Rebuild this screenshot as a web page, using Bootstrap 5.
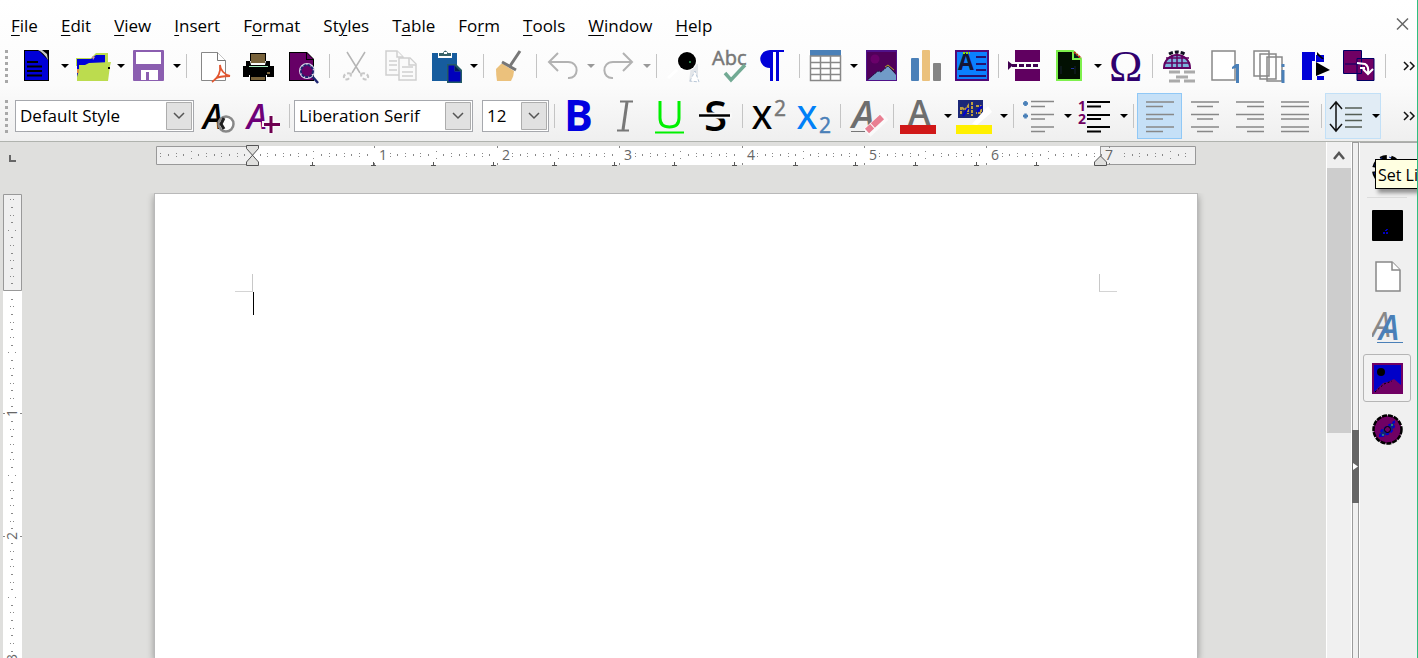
<!DOCTYPE html>
<html lang="en">
<head>
<meta charset="utf-8">
<meta name="viewport" content="width=device-width, initial-scale=1">
<title>Writer</title>
<link href="https://cdn.jsdelivr.net/npm/bootstrap@5.3.0/dist/css/bootstrap.min.css" rel="stylesheet">
<style>
body{font:17px/24px "Open Sans","Noto Sans",sans-serif;color:#000;background:#dfdfdd;border-right:1px solid #2fbf80}
.chrome{background:linear-gradient(#fff,#fbfbfb 60%,#efefef);border-bottom:1px solid #b0b3ae;padding-bottom:2px}
.menubar{height:43px;padding:14px 0 0 11px;gap:23px}
.menubar a{color:#000;text-decoration:none}
.menubar u{text-underline-offset:3px;text-decoration-thickness:1px}
.closer{width:30px;height:24px}
.tools{height:46px;padding-left:5px}
.tools-a{margin-bottom:4px}
.grip{width:3px;height:33px;margin-right:6px;background:repeating-linear-gradient(#a8a8a8 0 3px,transparent 3px 6px)}
.tool{width:45px;height:46px;padding:0 0 0 7px;border:0;background:none;text-align:left;display:flex;align-items:center;flex:none}
.tool svg{width:32px;height:32px;overflow:visible;flex:none}
.tool.drop{width:56px}
.tool.drop::after{content:"";border:4px solid transparent;border-top-color:#000;border-bottom:0;margin-left:8px}
.tool.drop.off::after{border-top-color:#999}
.tool.on{background:#c5e0f7;box-shadow:inset 0 0 0 1px #90c8f6}
.tool.hot{background:#e1ecf5;box-shadow:inset 0 0 0 1px #c2e0f7}
.rule{width:1px;height:24px;margin:0 3px 0 4px;background:#c4c4c4;flex:none}
.combo{height:32px;position:relative;flex:none;margin:0 1px}
.combo select{appearance:none;width:100%;height:32px;border:1px solid #a6a8ad;border-radius:0;background:#fff;padding:0 0 0 4px;color:#000;font-size:17px;line-height:30px}
.combo svg{position:absolute;right:1px;top:2px;width:27px;height:28px;pointer-events:none}
.combo-wide{width:179px}.combo-slim{width:67px}
.more{width:14px;height:14px;border:0;background:none;padding:0;margin-right:1px}
.more svg,.closer svg{display:block}
.corner{width:22px}
.vruler{width:22px;padding-left:3px}
.canvas-pad{padding-left:4px}
.ruler-row{height:51px}
.hruler{width:1040px;height:24px;margin-top:2px;display:block;overflow:visible;flex:none}
.sheet{width:1044px;background:#fff;border:1px solid #b9b9b9;border-bottom:0;box-shadow:0 3px 7px #0005;padding:80px 80px 0;flex:none}
.mark-l{width:18px;height:18px;border-right:1px solid #c8c8c8;border-bottom:1px solid #d4d4d4}
.mark-r{width:18px;height:18px;border-left:1px solid #c8c8c8;border-bottom:1px solid #d4d4d4}
.caret{width:1px;height:23px;margin-left:18px;background:#000}
.vbar{width:26px;background:#f0f0f0;border-left:1px solid #fff;border-right:1px solid #fff;flex:none}
.vbar button{height:26px;border:0;padding:0;background:#f0f0f0}
.thumb{height:51.4%;background:#cdcdcd}
.splitter{width:7px;border:solid #9b9b9b;border-width:1px 1px 0;background:#f0f0f0;padding-top:287px;flex:none}
.handle{display:block;width:7px;height:73px;margin-left:-1px;border:0;padding:0;background:#666}
.sidebar{width:58px;background:#f0f0f0;border-top:1px solid #aaa;border-left:1px solid #fff;padding:3px 6px 0 3px;gap:3px;flex:none;position:relative}
.deck{width:48px;height:48px;padding:0;border:1px solid transparent;border-radius:3px;background:none;display:flex;align-items:center;justify-content:center}
.deck.on{border-color:#b5b5b5;background:#f2f2f2}
.deck svg{width:31px;height:31px}
.side-line{height:1px;width:40px;background:#dcdcdc}
.tipbox{position:absolute;left:15px;top:16px;right:0;height:30px;border:1px solid #000;border-right:0;background:#ffffe1;box-shadow:3px 4px 4px #0006;padding:3px 0 0 2px;font-size:16px;white-space:nowrap;overflow:hidden}
svg text{font-family:"Open Sans","Noto Sans",sans-serif}
</style>
</head>
<body class="vh-100 d-flex flex-column overflow-hidden">
<header class="chrome">
 <div class="d-flex">
  <nav class="menubar d-flex flex-grow-1" aria-label="Menu">
   <a href="#"><u>F</u>ile</a><a href="#"><u>E</u>dit</a><a href="#"><u>V</u>iew</a><a href="#"><u>I</u>nsert</a><a href="#">F<u>o</u>rmat</a><a href="#">St<u>y</u>les</a><a href="#">T<u>a</u>ble</a><a href="#">Fo<u>r</u>m</a><a href="#"><u>T</u>ools</a><a href="#"><u>W</u>indow</a><a href="#"><u>H</u>elp</a>
  </nav>
  <button class="closer border-0 bg-transparent p-0 mt-2" aria-label="Close"><svg class="m-auto" width="18" height="32" viewBox="0 0 18 32"><path d="M4 10.500l11 11M15 10.500l-11 11" stroke="#666" stroke-width="1.500"/></svg></button>
 </div>
 <div class="tools tools-a d-flex align-items-center" role="toolbar" aria-label="Standard">
  <span class="grip"></span>
  <button class="tool drop" aria-label="New"><svg viewBox="0 0 32 32"><path d="M3 0h17l8 8v23H3z" fill="#000"/><path d="M4 1h14l9 9v20H4z" fill="#0000d8"/><path d="M19 0h9v9z" fill="#000"/><path d="M17 0q6 3 10 10l-1-6-5-4z" fill="#c8c8c8"/><path d="M6 12h11M6 16.500h15M6 21h15M6 25.500h15" stroke="#000" stroke-width="2"/></svg></button>
  <button class="tool drop" aria-label="Open"><svg viewBox="0 0 32 32"><path d="M-1 8h15l5-5h12v13H-1z" fill="#bcdc4e"/><path d="M0 9h14l5-4h9v9H14l-8 5-3 8H0z" fill="#0000d8"/><path d="M15 6l3 1-2 3z" fill="#d890a0"/><path d="M0 27l2-8v-4h6l4-2 22-1-1 4-2 15H0z" fill="#bcdc4e"/><path d="M0 19h2v4H0z" fill="#e09040"/><path d="M31 17h2v2h-2z" fill="#000"/></svg></button>
  <button class="tool drop" aria-label="Save"><svg viewBox="0 0 32 32"><rect width="31" height="31" rx="1" fill="#8b5eb0"/><path d="M3 2h25v12H3zM8 20h17v10H8z" fill="#fff"/><path d="M13 22h3v8h-3z" fill="#8b5eb0"/></svg></button>
  <span class="rule"></span>
  <button class="tool" aria-label="Export as PDF"><svg viewBox="0 0 32 32"><path d="M4.500 2.500h16l8 8v20h-24z" fill="#fff" stroke="#888"/><path d="M20.500 2.500v8h8" fill="#fff" stroke="#777"/><path d="M15 32c6-4 9-10 8-17 0 5 5 10 10 11-6 0-11 0-15 3" fill="none" stroke="#e2562f" stroke-width="1.800"/></svg></button>
  <button class="tool" aria-label="Print"><svg viewBox="0 0 32 32"><path d="M8 3h16v8H8zM8 25h16v6H8z" fill="#000"/><path d="M9 4h14v9H9zM9 27h14v3H9z" fill="#78623a"/><path d="M4 11h4l1 4h14l1-4h4v5h4v11h-7v-2H7v2H1V16h3z" fill="#000"/><path d="M7 16.500h19" stroke="#a6eec0"/><path d="M25 22h3v2h-3z" fill="#78623a"/></svg></button>
  <button class="tool" aria-label="Print Preview"><svg viewBox="0 0 32 32"><path d="M2 2h18l7 7v22H2z" fill="#000"/><path d="M3 3h16v7h7v20H3z" fill="#660066"/><path d="M20 3l6 6h-6z" fill="#660066"/><path d="M25 26l6 7" stroke="#1c2470" stroke-width="2.500"/><circle cx="20" cy="21" r="7" fill="#660066" stroke="#d8d8e8" stroke-width="2"/><circle cx="20" cy="21" r="6" fill="none" stroke="#1c2470" stroke-width="2" stroke-dasharray="3 1"/></svg></button>
  <span class="rule"></span>
  <button class="tool" aria-label="Cut" disabled><svg viewBox="0 0 32 32"><path d="M7 2l13 21M25 2L12 23" stroke="#b5b5b5" stroke-width="1.500"/><path d="M11 24c-4-2-8 1-7 4s7 1 7-4zM21 24c4-2 8 1 7 4s-7 1-7-4z" fill="none" stroke="#c8c8c8" stroke-width="2" stroke-dasharray="4 2"/></svg></button>
  <button class="tool" aria-label="Copy" disabled><svg viewBox="0 0 32 32" fill="#fafafa" stroke="#cfcfcf" stroke-width="1.500"><path d="M1 1h11l6 6v18H1z"/><path d="M12 1v6h6M4 11h8M4 15h8M4 20h8"/><path d="M14 8h11l6 6v16H14z"/><path d="M24 8v7h7M17 17h11M17 22h11M17 26h11"/></svg></button>
  <button class="tool drop" aria-label="Paste"><svg viewBox="0 0 32 32"><path d="M2 3h25v28H2z" fill="#165c9e"/><path d="M8 2h14v6H8z" fill="#fff"/><path d="M9 3h4q2-5 5 0h3v3H9z" fill="#386268"/><path d="M14 2h3v2h-3z" fill="#fff"/><path d="M17 14h9l6 6v13H17z" fill="#245b66"/><path d="M18.500 15.500h6v6h6v10h-12z" fill="#0000bc"/><path d="M25 16l5 5h-5z" fill="#052050"/></svg></button>
  <span class="rule"></span>
  <button class="tool" aria-label="Clone Formatting"><svg viewBox="0 0 32 32"><path d="M7 14l-5 5q0 6 1 12h14q3-5 3-10L9 14z" fill="#ebc17c"/><path d="M8 12l14 8M16 16L26 1" stroke="#777" stroke-width="3" fill="none"/></svg></button>
  <span class="rule"></span>
  <button class="tool drop off" aria-label="Undo"><svg viewBox="0 0 32 32" fill="none" stroke="#b2b2b2" stroke-width="2"><path d="M11 3L2 12l9 9M2 12h19c12 0 11 17 0 16"/></svg></button>
  <button class="tool drop off" aria-label="Redo"><svg viewBox="0 0 32 32" fill="none" stroke="#b2b2b2" stroke-width="2"><path d="M20 3l9 9-9 9M29 12H10C-2 12-1 29 10 28"/></svg></button>
  <span class="rule"></span>
  <button class="tool" aria-label="Find and Replace"><svg viewBox="0 0 32 32"><path d="M1 28l9-8" stroke="#fff" stroke-width="3"/><path d="M24 15l7-1v18h-9z" fill="#e3e6ea"/><path d="M23 31l5-10 4 11z" fill="#fff" stroke="#b9c8d8" stroke-dasharray="3 2"/><circle cx="20" cy="11" r="10" fill="#fff"/><circle cx="20" cy="11" r="9" fill="#000"/><path d="M22 11h2v2h-2z" fill="#297b46"/></svg></button>
  <button class="tool" aria-label="Spelling"><svg viewBox="0 0 32 32"><text x="0" y="15" font-size="20" fill="#777" stroke="#777" stroke-width=".5">Abc</text><path d="M13 23l6 7 14-15" fill="none" stroke="#72aa94" stroke-width="3.500"/></svg></button>
  <button class="tool" aria-label="Formatting Marks"><svg viewBox="0 0 32 32"><path d="M29 0v2h-5v29h-3V2h-3v29h-3V18C3 18 1 1 15 0z" transform="translate(-2)" fill="#0000d8"/></svg></button>
  <span class="rule"></span>
  <button class="tool drop" aria-label="Insert Table"><svg viewBox="0 0 32 32"><path d="M0 0h31v6H0z" fill="#4a80b8"/><path d="M.5 6h30v24.500H.500zM1 12.500h30M1 18.500h30M1 24.500h30M10.500 6v24M20.500 6v24" fill="#fff" stroke="#888" stroke-width="1.500"/></svg></button>
  <button class="tool" aria-label="Insert Image"><svg viewBox="0 0 32 32"><path d="M0 0h31v31H0z" fill="#50128a"/><path d="M1 2h29v28H1z" fill="#50005a"/><circle cx="9" cy="9" r="4.500" fill="#6a006a"/><path d="M2 30l10-9 3 1 7-6 8 9v5z" fill="#719bc8"/><path d="M2 29l10-8 3 1 7-6 8 8" fill="none" stroke="#171d40" stroke-dasharray="2 1"/><path d="M19 17l3-2 6 5" stroke="#b0a020" fill="none"/></svg></button>
  <button class="tool" aria-label="Insert Chart"><svg viewBox="0 0 32 32"><rect y="8" width="8" height="23" rx="1" fill="#4a80b8"/><rect x="11" width="8" height="31" rx="1" fill="#ebc17c"/><rect x="22" y="13" width="8" height="18" rx="1" fill="#848484"/></svg></button>
  <button class="tool" aria-label="Insert Text Box"><svg viewBox="0 0 32 32"><path d="M0 1h32v29H0z" fill="#0a80ff" stroke="#500a78" stroke-width="2"/><text x="2" y="20" font-size="23" font-weight="700" fill="#161636">A</text><path d="M20 7h10M20 14h10M20 20h10M3 26h27" stroke="#26106e" stroke-width="2"/><path d="M7 3h7" stroke="#8de010" stroke-width="2" stroke-dasharray="2 1"/></svg></button>
  <span class="rule"></span>
  <button class="tool" aria-label="Insert Page Break"><svg viewBox="0 0 32 32"><path d="M6 0h25v12H6zM6 19h25v12H6z" fill="#600060"/><path d="M-1 11l5 4-5 5z" fill="#400050"/><path d="M3 15.500h28" stroke="#400050" stroke-width="3" stroke-dasharray="5 2"/></svg></button>
  <button class="tool drop" aria-label="Insert Field"><svg viewBox="0 0 32 32"><path d="M3 1h16l8 8v21H3z" fill="#021002" stroke="#7ef04d" stroke-width="2"/><path d="M19 1v8h8" fill="#032020" stroke="#7ef04d" stroke-width="2"/><path d="M20 2l7 6" stroke="#c22" stroke-width="2" stroke-dasharray="2 1"/><path d="M7 24v-8M21 24v-8" stroke="#162030"/><path d="M17 18h3v1h-3z" fill="#2030a0"/></svg></button>
  <button class="tool" aria-label="Special Character"><svg viewBox="0 0 32 32"><text x="-1" y="31" font-size="45" style="font-family:'Liberation Serif',serif" fill="#30006e">Ω</text></svg></button>
  <span class="rule"></span>
  <button class="tool" aria-label="Hyperlink"><svg viewBox="0 0 32 32"><path d="M1 18A13 13 0 1 1 27 18z" fill="#7ab2dc" stroke="#600060" stroke-width="2"/><path d="M3 8h23M1 13h26M9 18V5M19 18V5M14 1v17" stroke="#600060" stroke-width="1.500"/><path d="M6 4q8-4 16 0" stroke="#101020" stroke-width="3" fill="none" stroke-dasharray="4 2"/><path d="M6 22h11M21 22h11M13 27h12M6 31h11M21 31h11" stroke="#aaa" stroke-width="3"/></svg></button>
  <button class="tool" aria-label="Insert Footnote"><svg viewBox="0 0 32 32"><path d="M4 1h23v29H4z" fill="#fff" stroke="#888" stroke-width="1.500"/><path d="M28 14h3v19h-3V18l-4 1v-2z" fill="#4a80b8"/></svg></button>
  <button class="tool" aria-label="Insert Endnote"><svg viewBox="0 0 32 32" fill="#fff" stroke="#888" stroke-width="1.500"><path d="M1 1h15v25H1zM7 4h16v25H7zM14 7h15v24H14z"/><path d="M30 14v3m0 3v13" stroke="#4a80b8" stroke-width="3"/></svg></button>
  <button class="tool" aria-label="Bookmark"><svg viewBox="0 0 32 32"><path d="M4 2h13v9h-3v19H4zM18 5h8v7h-8zM19 26h7v4h-7z" fill="#0000d8"/><path d="M19 2l7 7-2 0-5-4z" fill="#000"/><path d="M18 12l14 8-14 6z" fill="#000"/></svg></button>
  <button class="tool" aria-label="Cross-reference"><svg viewBox="0 0 32 32" fill="#700064" stroke="#000064"><path d="M.500.500h18v23H.500zM14 8.500h17v22H14z"/><path d="M2 14h15" /><path d="M14 13l8 1q4 2 3 9m-5-4l5 5 5-5M17 18h5" fill="none" stroke="#fff" stroke-width="2"/></svg></button>
  <span class="rule"></span>
  <button class="more ms-auto" aria-label="More controls"><svg width="14" height="14" viewBox="0 0 14 14"><path d="M2 3l4 4-4 4M8 3l4 4-4 4" fill="none" stroke="#111" stroke-width="1.500"/></svg></button>
 </div>
 <div class="tools d-flex align-items-center" role="toolbar" aria-label="Formatting">
  <span class="grip"></span>
  <div class="combo combo-wide"><select aria-label="Paragraph style"><option>Default Style</option></select><svg viewBox="0 0 27 28"><path d="M.5.500h25v27H.500z" fill="#e1e1e1" stroke="#adadad"/><path d="M8 11l5 5 5-5" fill="none" stroke="#555" stroke-width="1.500"/></svg></div>
  <button class="tool" aria-label="Update Style"><svg viewBox="0 0 32 32"><text x="1" y="29" font-size="34" font-style="italic" font-weight="600" fill="#000">A</text><circle cx="24" cy="24" r="7.500" fill="#fff" stroke="#888" stroke-width="2.500"/><path d="M22 18l-3 6 3 5" fill="none" stroke="#222" stroke-width="3"/></svg></button>
  <button class="tool" aria-label="New Style"><svg viewBox="0 0 32 32"><text x="0" y="29" font-size="34" font-style="italic" font-weight="600" fill="#6e0078">A</text><path d="M24 15v18M15 24h18" stroke="#fafafa" stroke-width="6"/><path d="M24 16v17M17 24.500h16" stroke="#6e0050" stroke-width="3"/></svg></button>
  <span class="rule"></span>
  <div class="combo combo-wide"><select aria-label="Font name"><option>Liberation Serif</option></select><svg viewBox="0 0 27 28"><path d="M.5.500h25v27H.500z" fill="#e1e1e1" stroke="#adadad"/><path d="M8 11l5 5 5-5" fill="none" stroke="#555" stroke-width="1.500"/></svg></div>
  <div class="combo combo-slim ms-2"><select aria-label="Font size"><option>12</option></select><svg viewBox="0 0 27 28"><path d="M.5.500h25v27H.500z" fill="#e1e1e1" stroke="#adadad"/><path d="M8 11l5 5 5-5" fill="none" stroke="#555" stroke-width="1.500"/></svg></div>
  <span class="rule"></span>
  <button class="tool" aria-label="Bold"><svg viewBox="0 0 32 32"><text x="-1" y="31" font-size="43" font-weight="700" fill="#0000e0">B</text></svg></button>
  <button class="tool" aria-label="Italic"><svg viewBox="0 0 32 32" stroke="#777" fill="none"><path d="M10 1.500h13M7 30.500h12" stroke-width="2"/><path d="M17 2l-4 28" stroke-width="3"/></svg></button>
  <button class="tool" aria-label="Underline"><svg viewBox="0 0 32 32" stroke="#00f000" fill="none"><path d="M5 1v17q0 9 9.500 9T24 18V1" stroke-width="3"/><path d="M0 32.500h29" stroke-width="2"/></svg></button>
  <button class="tool" aria-label="Strikethrough"><svg viewBox="0 0 32 32"><text x="4" y="31" font-size="42" font-weight="600" fill="#000">S</text><path d="M0 15.500h32" stroke="#f9f9f9" stroke-width="6"/><path d="M-1 15.500h31" stroke="#000" stroke-width="2.500"/></svg></button>
  <span class="rule"></span>
  <button class="tool" aria-label="Superscript"><svg viewBox="0 0 32 32"><text x="-1" y="29" font-size="32" font-weight="600" fill="#000">X</text><text x="21" y="16" font-size="21" fill="#777" stroke="#777" stroke-width=".5">2</text></svg></button>
  <button class="tool" aria-label="Subscript"><svg viewBox="0 0 32 32"><text x="-1" y="29" font-size="32" font-weight="600" fill="#0080f8">X</text><text x="21" y="33" font-size="21" fill="#4a80b8" stroke="#4a80b8" stroke-width=".5">2</text></svg></button>
  <span class="rule"></span>
  <button class="tool" aria-label="Clear Formatting"><svg viewBox="0 0 32 32"><text x="1" y="28" font-size="38" font-style="italic" font-weight="600" fill="#6e6e6e">A</text><path d="M16 33L34 16" stroke="#fafafa" stroke-width="10"/><path d="M16 31L31 17" stroke="#e97f92" stroke-width="6" stroke-dasharray="7 1 20"/><path d="M0 31.500h14" stroke="#777"/></svg></button>
  <span class="rule"></span>
  <button class="tool drop" aria-label="Font Color"><svg viewBox="0 0 32 32"><text x="4" y="25" font-size="34" font-weight="600" fill="#6e6e6e">A</text><path d="M-4 25h36v9H-4z" fill="#d01818"/></svg></button>
  <button class="tool drop" aria-label="Highlighting"><svg viewBox="0 0 32 32"><path d="M-2 0h25v18H-2z" fill="#1c2878"/><path d="M1 14V7l4 3 3-4v8M12 2v14M16 6h5v7h-5" fill="none" stroke="#c0a040" stroke-width="2" stroke-dasharray="3 1"/><path d="M3 16l5-8M17 12l5-6" stroke="#0000d0" stroke-width="2"/><path d="M12 24L28 6l4 6-15 13z" fill="#fff"/><path d="M-4 25h36v9H-4z" fill="#fff000"/></svg></button>
  <span class="rule"></span>
  <button class="tool drop" aria-label="Bullets"><svg viewBox="0 0 32 32"><path d="M7 1.500h23M7 6.500h14M7 14.500h23M7 19h14M7 27h23M7 31.500h14" stroke="#888" stroke-width="1.500"/><path d="M-1 3.500h5M1.500 1v5M-1 16h5M1.500 13.500v5" stroke="#4a80b8" stroke-width="2.500"/></svg></button>
  <button class="tool drop" aria-label="Numbering"><svg viewBox="0 0 32 32"><path d="M7 2h23M7 6.500h14M7 15h23M7 19h14M7 27h23M7 31.500h14" stroke="#000" stroke-width="2"/><g font-size="14" font-weight="700" fill="#700060"><text x="-2" y="11">1</text><text x="-2" y="24">2</text></g></svg></button>
  <span class="rule"></span>
  <button class="tool on" aria-label="Align Left"><svg viewBox="0 0 32 32"><path d="M2 2h28M2 6.500h17M2 14.500h28M2 19h17M2 27h28M2 31.500h17" stroke="#888" stroke-width="1.500"/></svg></button>
  <button class="tool" aria-label="Align Center"><svg viewBox="0 0 32 32"><path d="M2 2h28M8 6.500h16M2 14.500h28M8 19h16M2 27h28M8 31.500h16" stroke="#888" stroke-width="1.500"/></svg></button>
  <button class="tool" aria-label="Align Right"><svg viewBox="0 0 32 32"><path d="M2 2h28M13 6.500h17M2 14.500h28M13 19h17M2 27h28M13 31.500h17" stroke="#888" stroke-width="1.500"/></svg></button>
  <button class="tool" aria-label="Justify"><svg viewBox="0 0 32 32"><path d="M2 2h28M2 6.500h28M2 14.500h28M2 19h28M2 27h28M2 31.500h28" stroke="#888" stroke-width="1.500"/></svg></button>
  <span class="rule"></span>
  <button class="tool drop hot" aria-label="Set Line Spacing"><svg viewBox="0 0 32 32" fill="none"><path d="M-2 9l6-7 6 7M4 2v29M-2 24l6 7 6-7" stroke="#111" stroke-width="1.500"/><path d="M13 8h17M13 14.500h17M13 20.500h17M13 27h17" stroke="#555e55" stroke-width="1.500"/></svg></button>
  <button class="more ms-auto" aria-label="More controls"><svg width="14" height="14" viewBox="0 0 14 14"><path d="M2 3l4 4-4 4M8 3l4 4-4 4" fill="none" stroke="#111" stroke-width="1.500"/></svg></button>
 </div>
</header>
<main class="d-flex flex-grow-1 overflow-hidden">
 <div class="d-flex flex-column flex-grow-1 overflow-hidden">
  <div class="ruler-row d-flex flex-shrink-0">
   <div class="corner"><svg width="22" height="22"><path d="M10 11v6h6" fill="none" stroke="#666" stroke-width="2"/></svg></div>
   <div class="canvas-pad d-flex justify-content-center flex-grow-1"><svg class="hruler" id="hruler" viewBox="0 0 1040 24"></svg></div>
  </div>
  <div class="d-flex flex-grow-1 overflow-hidden">
   <div class="vruler"><svg id="vruler" width="19" height="600" viewBox="0 0 19 600"></svg></div>
   <div class="canvas-pad d-flex justify-content-center flex-grow-1">
    <div class="sheet"><div class="d-flex justify-content-between"><span class="mark-l"></span><span class="mark-r"></span></div><div class="caret"></div></div>
   </div>
  </div>
 </div>
 <div class="vbar d-flex flex-column"><button aria-label="Scroll up"><svg width="24" height="26"><path d="M7 17l5-6 5 6" fill="none" stroke="#555" stroke-width="2.500"/></svg></button><div class="thumb"></div></div>
 <div class="splitter"><button class="handle" aria-label="Toggle sidebar"><svg class="d-block" width="7" height="73"><path d="M1 33v7l5-3.500z" fill="#fff"/></svg></button></div>
 <aside class="sidebar d-flex flex-column align-items-center">
  <button class="deck" aria-label="Sidebar Settings"><svg viewBox="0 0 31 31"><circle cx="15" cy="15" r="12" fill="none" stroke="#000" stroke-width="6" stroke-dasharray="6 4"/><circle cx="15" cy="15" r="13" fill="none" stroke="#1030b0" stroke-dasharray="2 7"/></svg></button>
  <span class="side-line"></span>
  <button class="deck" aria-label="Properties"><svg viewBox="0 0 31 31"><rect width="31" height="31" rx="1" fill="#000"/><path d="M11 22h2v2h-2zM14 22h2v2h-2zM13 20h2v1h-2zM14 19h2v1h-2z" fill="#0000c0"/></svg></button>
  <button class="deck" aria-label="Page"><svg viewBox="0 0 31 31" fill="#fff" stroke="#888" stroke-width="1.500"><path d="M4 1h16l8 8v21H4z"/><path d="M20 1v8h8"/></svg></button>
  <button class="deck" aria-label="Styles"><svg viewBox="0 0 31 31"><text x="0" y="25" font-size="34" font-style="italic" fill="#888">A</text><text x="7" y="28" font-size="34" font-style="italic" font-weight="600" fill="#4a80b8">A</text><path d="M5 30.500h26" stroke="#4a80b8"/></svg></button>
  <button class="deck on" aria-label="Gallery"><svg viewBox="0 0 31 31"><path d="M0 0h31v31H0z" fill="#700064"/><path d="M2 2h27v27H2z" fill="#0000c8"/><path d="M2 29l9-9 5-1 6-3 7 6v7z" fill="#700064"/><path d="M3 29l9-8 8-3" stroke="#000" stroke-dasharray="2 2" fill="none"/><circle cx="9" cy="9" r="4" fill="#000"/></svg></button>
  <button class="deck" aria-label="Navigator"><svg viewBox="0 0 31 31"><circle cx="15.500" cy="15.500" r="14" fill="#700064" stroke="#000" stroke-width="2.500" stroke-dasharray="5 1"/><path d="M8 23q0-7 5-9l9-6q1 6-4 11z" fill="#102080" stroke="#0000d0" stroke-width="2" stroke-dasharray="3 2"/><circle cx="15.500" cy="15.500" r="3" fill="#700064" stroke="#000"/><path d="M19 11h2M10 21h2" stroke="#4d6"/></svg></button>
  <div class="tipbox" role="tooltip">Set Li</div>
 </aside>
</main>
<script src="https://cdn.jsdelivr.net/npm/bootstrap@5.3.0/dist/js/bootstrap.bundle.min.js"></script>
<script>
// Ruler scale: one inch on screen, divided into sixteenths.
const INCH = 122.4;
const box = (x, y, w, h, fill) => `<rect x="${x}" y="${y}" width="${w}" height="${h}" fill="${fill}"/>`;

function horizontalRuler() {
  const zero = 96, right = 944;
  let s = box(0, 2, 1040, 19, '#fff') + box(0, 2, zero, 19, '#f0f0f0') + box(right, 2, 96, 19, '#f0f0f0');
  s += '<path d="M96 2.500H.500v18H96M944 2.500h95.500v18H944M944.500 2v12" fill="none" stroke="#999"/>';
  for (let k = -12; k <= 122; k++) {
    const x = Math.round(zero + k * INCH / 16);
    if (k === 0 || x > 1036) continue;
    if (k > 0 && k % 16 === 0) {
      // The last number sits next to the right margin marker.
      const tx = x > right ? x - 4 : x + 5;
      s += box(x, 2, 1, 2, '#888') + box(x, 19, 1, 2, '#888');
      s += `<text x="${tx}" y="16" font-size="14" fill="#666">${k / 16}</text>`;
    } else if (k % 16 === 1 && k > 1) {
      continue;
    } else {
      const g = k % 8 === 0 ? 4 : k % 2 ? 1 : 2;
      s += box(x, 11 - g, 1, 1, '#888') + box(x, 10 + g, 1, 1, '#888');
    }
  }
  for (let n = 1; n < 14; n++) {
    const x = Math.round(zero + n * 60.3);
    s += box(x, 18, 1, 3, '#555') + box(x - 2, 21, 5, 1, '#555');
  }
  s += '<path d="M90.500 1.500h12v3L90.500 18v3.500h12V18L90.500 4.500zM938.500 21.500h12V18l-6-6-6 6z" fill="#e0e0de" stroke="#555"/>';
  document.getElementById('hruler').innerHTML = s;
}

function verticalRuler() {
  const zero = 98;
  let s = box(0, 1, 19, 599, '#fff') + box(0, 1, 19, 97, '#f0f0f0');
  s += '<path d="M.5 1.500h18v96H.500z" fill="none" stroke="#999"/>';
  for (let k = -12; k <= 65; k++) {
    const y = Math.round(zero + k * INCH / 16);
    if (k === 0) continue;
    if (k > 0 && k % 16 === 0) {
      s += box(0, y, 2, 1, '#888') + box(17, y, 2, 1, '#888');
      s += `<text transform="translate(14 ${y + 4}) rotate(-90)" font-size="14" fill="#666">${k / 16}</text>`;
    } else {
      const g = k % 8 === 0 ? 4 : k % 2 ? 1 : 2;
      s += box(9 - g, y, 1, 1, '#888') + box(8 + g, y, 1, 1, '#888');
    }
  }
  document.getElementById('vruler').innerHTML = s;
}
horizontalRuler();
verticalRuler();
</script>
</body>
</html>
